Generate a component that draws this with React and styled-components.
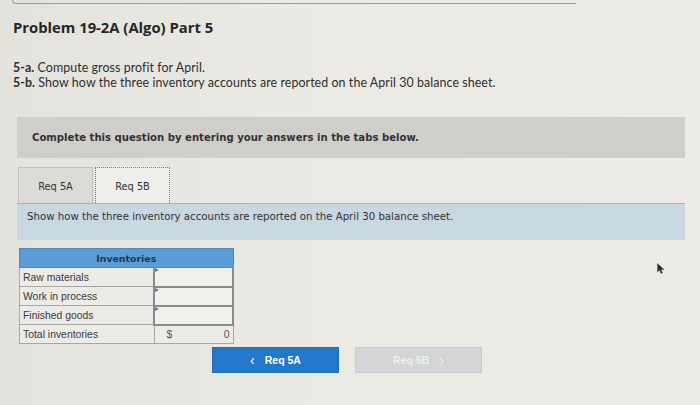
import styled, { createGlobalStyle } from 'styled-components';

const Global = createGlobalStyle`
  html, body {
    margin: 0;
    padding: 0;
    background: #e9e7e2;
  }
  body {
    font-family: 'Open Sans', 'Liberation Sans', sans-serif;
    color: #2b2b2b;
  }
`;

const Page = styled('div')`
  position: relative;
  width: 700px;
  height: 405px;
  overflow: hidden;
  background: linear-gradient(90deg, #e4e2dd 0%, #ebe9e4 40%, #edebe6 100%);
`;

const TopFrame = styled('div')`
  margin-left: 12px;
  width: 563px;
  height: 3px;
  border-left: 1px solid #9c9c9a;
  border-bottom: 1px solid #9c9c9a;
  border-bottom-left-radius: 4px;
`;

const Header = styled('div')`
  padding: 13px 0 0 13px;
`;

const Title = styled('h1')`
  margin: 0;
  font-family: 'Open Sans', sans-serif;
  font-size: 14.8px;
  font-weight: 700;
  line-height: 20px;
  color: #262626;
`;

const Desc = styled('div')`
  margin-top: 23px;
  font-family: Lato, 'Open Sans', sans-serif;
  font-size: 12.4px;
  letter-spacing: 0.08px;
  line-height: 15px;
  color: #2e2e2e;
  b {
    font-weight: 700;
  }
`;

const Banner = styled('div')`
  margin: 27px 15px 0 17px;
  height: 41px;
  display: flex;
  align-items: center;
  padding-left: 15px;
  background: #d0ceca;
  font-family: 'DejaVu Sans', Verdana, sans-serif;
  font-size: 10.1px;
  font-weight: 700;
  color: #333;
`;

const Tabs = styled('div')`
  display: flex;
  margin: 9px 0 0 18px;
  gap: 2px;
`;

const Tab = styled('div')`
  width: 75px;
  height: 36px;
  box-sizing: border-box;
  display: flex;
  align-items: center;
  justify-content: center;
  padding-top: 1px;
  font-family: 'DejaVu Sans', Verdana, sans-serif;
  font-size: 9.8px;
  color: #333;
  background: ${(p) => (p.$active ? '#efeeea' : '#dddbd6')};
  border: ${(p) => (p.$active ? '1px dotted #777' : '1px solid #c4c2be')};
  border-bottom: none;
`;

const Instructions = styled('div')`
  margin: 0 15px 0 17px;
  height: 37px;
  box-sizing: border-box;
  padding: 7px 0 0 10px;
  background: #c9d7e0;
  border-top: 1px solid #a9b4bb;
  font-family: 'DejaVu Sans', Verdana, sans-serif;
  font-size: 10.2px;
  color: #333;
`;

const Table = styled('table')`
  margin: 8px 0 0 19px;
  border-collapse: collapse;
  font-family: 'Liberation Sans', Arial, sans-serif;
  font-size: 10.4px;
  color: #3a3a3a;
`;

const HeadCell = styled('th')`
  height: 18px;
  padding: 0;
  background: #5b9bd8;
  border: 1px solid #4d8ac4;
  font-family: 'DejaVu Sans', Verdana, sans-serif;
  font-size: 9.4px;
  font-weight: 700;
  color: #25374a;
  text-align: center;
`;

const Label = styled('td')`
  width: 130px;
  height: 18px;
  padding: 0 0 0 3px;
  border: 1px solid #a8a7a3;
  background: #ecebe7;
`;

const InputCell = styled('td')`
  position: relative;
  width: 77px;
  padding: 0;
  border: 2px solid #8a8a88;
  border-top-width: ${(p) => (p.$first ? '1px' : '2px')};
  background: #f1f0ec;
  &::before {
    content: '';
    position: absolute;
    left: 0;
    top: 0;
    border-left: 4px solid #4a7fb8;
    border-top: 2.5px solid transparent;
    border-bottom: 2.5px solid transparent;
  }
`;

const TotalCell = styled('td')`
  padding: 0 3px 0 12px;
  border: 1px solid #a8a7a3;
  background: #ecebe7;
  color: #555;
`;

const TotalInner = styled('div')`
  display: flex;
  justify-content: space-between;
`;

const Nav = styled('div')`
  display: flex;
  gap: 16px;
  margin: 3px 0 0 212px;
`;

const NavButton = styled('div')`
  width: 127px;
  height: 26px;
  display: flex;
  align-items: center;
  justify-content: center;
  gap: 10px;
  font-family: 'Liberation Sans', Arial, sans-serif;
  font-size: 10.5px;
  font-weight: 700;
  background: ${(p) => (p.$disabled ? '#d3d5d6' : '#2478cc')};
  color: ${(p) => (p.$disabled ? '#eef0f1' : '#ffffff')};
  border: 1px solid ${(p) => (p.$disabled ? '#c9cbcc' : '#1f6cb8')};
  box-sizing: border-box;
`;

const Chevron = styled('span')`
  font-size: 14px;
  font-weight: 400;
`;

const Cursor = styled('svg')`
  position: absolute;
  left: 657px;
  top: 263px;
`;

const rows = ['Raw materials', 'Work in process', 'Finished goods'];

export default function App() {
  return (
    <Page>
      <Global />
      <TopFrame />
      <Header>
        <Title>Problem 19-2A (Algo) Part 5</Title>
        <Desc>
          <div>
            <b>5-a.</b> Compute gross profit for April.
          </div>
          <div>
            <b>5-b.</b> Show how the three inventory accounts are reported on the April 30 balance sheet.
          </div>
        </Desc>
      </Header>
      <Banner>Complete this question by entering your answers in the tabs below.</Banner>
      <Tabs>
        <Tab>Req 5A</Tab>
        <Tab $active>Req 5B</Tab>
      </Tabs>
      <Instructions>
        Show how the three inventory accounts are reported on the April 30 balance sheet.
      </Instructions>
      <Table>
        <thead>
          <tr>
            <HeadCell colSpan={2}>Inventories</HeadCell>
          </tr>
        </thead>
        <tbody>
          {rows.map((r, i) => (
            <tr key={r}>
              <Label>{r}</Label>
              <InputCell $first={i === 0} />
            </tr>
          ))}
          <tr>
            <Label>Total inventories</Label>
            <TotalCell>
              <TotalInner>
                <span>$</span>
                <span>0</span>
              </TotalInner>
            </TotalCell>
          </tr>
        </tbody>
      </Table>
      <Nav>
        <NavButton>
          <Chevron>‹</Chevron>
          Req 5A
        </NavButton>
        <NavButton $disabled>
          Req 5B
          <Chevron>›</Chevron>
        </NavButton>
      </Nav>
      <Cursor width="8" height="11" viewBox="0 0 8 11">
        <path d="M0.5 0.5 L0.5 9 L2.6 7 L4 10.5 L5.4 9.9 L4 6.6 L7 6.6 Z" fill="#2a2a2a" stroke="#555" strokeWidth="0.5" />
      </Cursor>
    </Page>
  );
}
